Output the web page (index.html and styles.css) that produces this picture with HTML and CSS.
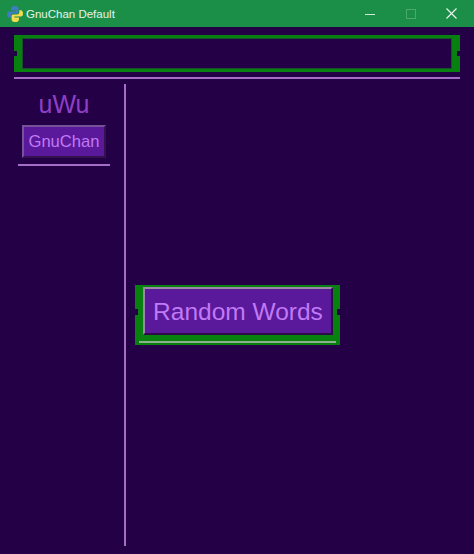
FILE: index.html
```html
<!DOCTYPE html>
<html lang="en">
<head>
  <meta charset="UTF-8" />
  <title>GnuChan Default</title>
  <link rel="stylesheet" href="styles.css">
</head>
<body>

<div class="titlebar">
  <svg class="app-icon" width="16" height="16" viewBox="1 1 14 14">
    <path d="M8 1C5.500 1 4.500 2 4.500 3.500V5H8.500V5.800H3C1.500 5.800 1 7 1 8.500C1 10 1.600 11.200 3 11.200H4.500V9.500C4.500 8.300 5.400 7.500 6.500 7.500H9.500C10.500 7.500 11 6.800 11 6V3.500C11 2 10 1 8 1Z" fill="#3f7cc0"/>
    <path d="M8 15C10.500 15 11.500 14 11.500 12.500V11H7.500V10.200H13C14.500 10.200 15 9 15 7.500C15 6 14.400 4.800 13 4.800H11.800V6.500C11.800 7.700 10.900 8.500 9.800 8.500H6.500C5.500 8.500 5 9.200 5 10V12.500C5 14 6 15 8 15Z" fill="#f2d94e"/>
  </svg>
  <span class="title">GnuChan Default</span>
  <div class="window-btns">
    <span class="win-btn"><svg width="10" height="10" viewBox="0 0 10 10"><path d="M0 5.500H10" stroke="#cfe8d8" stroke-width="1"/></svg></span>
    <span class="win-btn"><svg width="10" height="10" viewBox="0 0 10 10"><rect x="0.500" y="0.500" width="9" height="9" fill="none" stroke="#4aa86d" stroke-width="1"/></svg></span>
    <span class="win-btn"><svg width="11" height="11" viewBox="0 0 11 11"><path d="M0.500 0.500L10.500 10.500M10.500 0.500L0.500 10.500" stroke="#f2f8f4" stroke-width="1.100"/></svg></span>
  </div>
</div>

<div class="content">
  <div class="entry-frame">
    <span class="notch notch-left"></span>
    <span class="notch notch-right"></span>
    <div class="entry"></div>
  </div>
  <div class="top-rule"></div>

  <div class="main">
    <div class="sidebar">
      <div class="logo-text">uWu</div>
      <button class="side-btn">GnuChan</button>
      <div class="side-rule"></div>
    </div>
    <div class="panel">
      <div class="random-frame">
        <span class="notch notch-left"></span>
        <span class="notch notch-right"></span>
        <button class="random-btn">Random Words</button>
        <div class="random-rule"></div>
      </div>
    </div>
  </div>
</div>

</body>
</html>
```

FILE: styles.css
```css
* {
  box-sizing: border-box;
}

body {
  margin: 0;
  width: 474px;
  height: 554px;
  overflow: hidden;
  background-color: #240046;
  font-family: "Liberation Sans", Arial, sans-serif;
  display: flex;
  flex-direction: column;
}

.titlebar {
  height: 27px;
  background-color: #1b8f48;
  display: flex;
  align-items: center;
  padding-left: 7px;
  color: #e6f3ea;
}

.app-icon {
  flex: none;
}

.title {
  margin-left: 3px;
  font-size: 11.500px;
}

.window-btns {
  margin-left: auto;
  padding-right: 2px;
  display: flex;
}

.win-btn {
  width: 41px;
  height: 27px;
  display: flex;
  align-items: center;
  justify-content: center;
}

.content {
  flex: 1;
  padding: 8px 14px 8px;
  display: flex;
  flex-direction: column;
}

.entry-frame {
  position: relative;
  height: 37px;
  background-color: #088010;
  padding: 3px 8px;
}

.entry {
  height: 100%;
  background-color: #240046;
  border: 1px solid #17502a;
}

.notch {
  position: absolute;
  top: 50%;
  width: 3px;
  height: 5px;
  margin-top: -3px;
  background-color: #240046;
}

.notch-left {
  left: 0;
}

.notch-right {
  right: 0;
}

.top-rule {
  height: 2px;
  margin-top: 5px;
  background-color: #a56cc8;
}

.main {
  flex: 1;
  margin-top: 5px;
  display: flex;
}

.sidebar {
  width: 112px;
  border-right: 2px solid #a56cc8;
  padding-top: 6px;
  padding-right: 14px;
  padding-left: 4px;
  display: flex;
  flex-direction: column;
  align-items: center;
}

.logo-text {
  font-size: 25px;
  line-height: 28px;
  color: #8f3fc7;
}

.side-btn {
  width: 84px;
  height: 33px;
  margin-top: 7px;
  padding: 0;
  background-color: #5a189a;
  border: 2px solid;
  border-color: #75529a #34124f #34124f #75529a;
  color: #c07af5;
  font-family: inherit;
  font-size: 16.600px;
}

.side-rule {
  width: 92px;
  height: 2px;
  margin-top: 6px;
  background-color: #a56cc8;
}

.panel {
  flex: 1;
  padding-left: 9px;
  padding-top: 201px;
}

.random-frame {
  position: relative;
  width: 205px;
  height: 60px;
  background-color: #088010;
  padding: 2px 7px 0 8px;
}

.random-frame .notch {
  top: 24px;
  margin-top: 0;
  height: 6px;
}

.random-btn {
  display: block;
  width: 190px;
  height: 48px;
  padding: 2px 0 0;
  background-color: #5a189a;
  border: 2px solid;
  border-color: #9a8aa8 #2c0c48 #2c0c48 #9a8aa8;
  color: #c07af5;
  font-family: inherit;
  font-size: 24.500px;
  white-space: nowrap;
}

.random-rule {
  height: 2px;
  margin: 6px -3px 0 -4px;
  background-color: #8fb08f;
}
```
